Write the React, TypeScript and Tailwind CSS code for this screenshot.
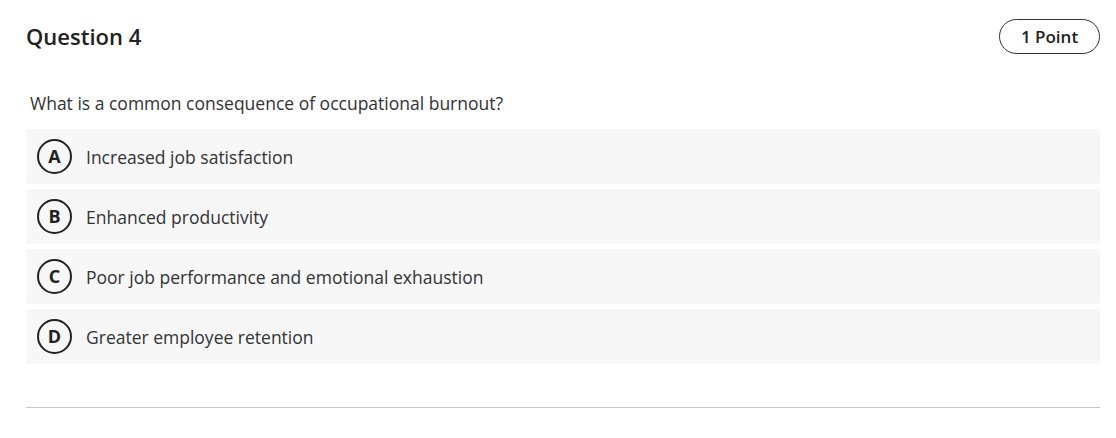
import React from "react";

const options = [
  { letter: "A", text: "Increased job satisfaction" },
  { letter: "B", text: "Enhanced productivity" },
  { letter: "C", text: "Poor job performance and emotional exhaustion" },
  { letter: "D", text: "Greater employee retention" },
];

export default function App() {
  return (
    <div
      className="w-[1116px] h-[438px] bg-white pl-[26px] pr-[16px] pt-[19px]"
      style={{ fontFamily: '"Open Sans", sans-serif' }}
    >
      <div className="flex justify-between items-start">
        <h1 className="text-[22px] leading-[35px] font-semibold text-[#222]">Question 4</h1>
        <div className="h-[35px] w-[101px] rounded-full border border-[#333] flex items-center justify-center text-[17px] font-semibold text-[#222]">
          1 Point
        </div>
      </div>
      <p className="mt-[37px] pl-[4px] text-[17.5px] leading-[24px] text-[#333]">
        What is a common consequence of occupational burnout?
      </p>
      <div className="mt-[14px] flex flex-col gap-[5px]">
        {options.map((o) => (
          <div
            key={o.letter}
            className="h-[55px] bg-[#f7f7f7] rounded-[3px] flex items-center pl-[11px]"
          >
            <div className="w-[35px] h-[35px] rounded-full border-2 border-[#222] flex items-center justify-center text-[18px] font-bold text-[#222] shrink-0">
              {o.letter}
            </div>
            <span className="ml-[14px] text-[17.5px] leading-[24px] pt-px text-[#333]">{o.text}</span>
          </div>
        ))}
      </div>
      <div className="mt-[43px] h-px bg-[#c8c8c8]" />
    </div>
  );
}
